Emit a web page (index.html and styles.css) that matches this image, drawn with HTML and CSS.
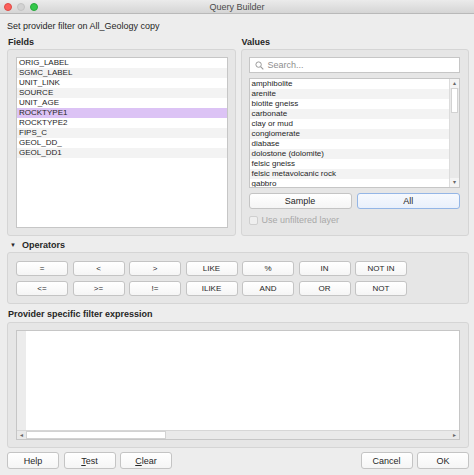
FILE: index.html
```html
<!DOCTYPE html>
<html lang="en">
<head>
  <meta charset="UTF-8" />
  <title>Query Builder</title>
  <link rel="stylesheet" href="styles.css">
</head>
<body>
  <div class="window">
    <div class="titlebar">
      <div class="lights">
        <span class="light red"></span>
        <span class="light off"></span>
        <span class="light green"></span>
      </div>
      <div class="title">Query Builder</div>
    </div>

    <div class="content">
      <div class="intro">Set provider filter on All_Geology copy</div>

      <div class="columns">
        <!-- FIELDS -->
        <div class="column">
          <div class="heading">Fields</div>
          <div class="group fields-group">
            <ul class="list">
              <li>ORIG_LABEL</li>
              <li>SGMC_LABEL</li>
              <li>UNIT_LINK</li>
              <li>SOURCE</li>
              <li>UNIT_AGE</li>
              <li class="selected">ROCKTYPE1</li>
              <li>ROCKTYPE2</li>
              <li>FIPS_C</li>
              <li>GEOL_DD_</li>
              <li>GEOL_DD1</li>
            </ul>
          </div>
        </div>

        <!-- VALUES -->
        <div class="column">
          <div class="heading">Values</div>
          <div class="group values-group">
            <div class="search">
              <svg width="9" height="9" viewBox="0 0 9 9"><circle cx="3.6" cy="3.6" r="2.7" fill="none" stroke="#9a9a9a" stroke-width="1"/><line x1="5.6" y1="5.6" x2="8.3" y2="8.3" stroke="#9a9a9a" stroke-width="1.1"/></svg>
              <span>Search...</span>
            </div>
            <div class="values-list">
              <ul class="list">
                <li>amphibolite</li>
                <li>arenite</li>
                <li>biotite gneiss</li>
                <li>carbonate</li>
                <li>clay or mud</li>
                <li>conglomerate</li>
                <li>diabase</li>
                <li>dolostone (dolomite)</li>
                <li>felsic gneiss</li>
                <li>felsic metavolcanic rock</li>
                <li>gabbro</li>
                <li>granite</li>
              </ul>
              <div class="vscroll">
                <span class="arrow">&#9652;</span>
                <span class="thumb"></span>
                <span class="track"></span>
                <span class="arrow">&#9662;</span>
              </div>
            </div>
            <div class="pair">
              <button class="btn">Sample</button>
              <button class="btn default">All</button>
            </div>
            <label class="check"><span class="box"></span>Use unfiltered layer</label>
          </div>
        </div>
      </div>

      <!-- OPERATORS -->
      <div class="heading op-heading"><span class="caret">&#9660;</span>Operators</div>
      <div class="group ops-group">
        <div class="ops">
          <button class="btn op">=</button>
          <button class="btn op">&lt;</button>
          <button class="btn op">&gt;</button>
          <button class="btn op">LIKE</button>
          <button class="btn op">%</button>
          <button class="btn op">IN</button>
          <button class="btn op">NOT IN</button>
          <button class="btn op">&lt;=</button>
          <button class="btn op">&gt;=</button>
          <button class="btn op">!=</button>
          <button class="btn op">ILIKE</button>
          <button class="btn op">AND</button>
          <button class="btn op">OR</button>
          <button class="btn op">NOT</button>
        </div>
      </div>

      <!-- EXPRESSION -->
      <div class="heading expr-heading">Provider specific filter expression</div>
      <div class="group expr-group">
        <div class="editor">
          <div class="editor-body">
            <div class="gutter"></div>
            <div class="text"></div>
          </div>
          <div class="hscroll">
            <span class="arrow">&#9666;</span>
            <span class="thumb"></span>
            <span class="track"></span>
            <span class="arrow">&#9656;</span>
          </div>
        </div>
      </div>

      <div class="footer">
        <div class="footer-left">
          <button class="btn foot">Help</button>
          <button class="btn foot"><u>T</u>est</button>
          <button class="btn foot"><u>C</u>lear</button>
        </div>
        <div class="footer-right">
          <button class="btn foot">Cancel</button>
          <button class="btn foot">OK</button>
        </div>
      </div>
    </div>
  </div>
</body>
</html>
```

FILE: styles.css
```css
:root {
  --window-bg: #ededed;
  --group-bg: #e6e6e6;
  --group-border: #d5d5d5;
  --field-border: #c6c6c6;
  --alt-row: #f3f3f3;
  --selected: #dcc3f5;
  --text: #262626;
  --muted: #a8a8a8;
}

* {
  box-sizing: border-box;
}

body {
  margin: 0;
  background: var(--window-bg);
  font-family: 'Liberation Sans', Arial, sans-serif;
  color: var(--text);
}

.window {
  width: 474px;
  height: 475px;
  display: flex;
  flex-direction: column;
}

.titlebar {
  height: 14px;
  position: relative;
  background: linear-gradient(#ebebeb, #d5d5d5);
  border-bottom: 1px solid #b9b9b9;
  display: flex;
  align-items: center;
  justify-content: center;
}

.lights {
  position: absolute;
  left: 4px;
  top: 3px;
  display: flex;
  gap: 5px;
}

.light {
  width: 8px;
  height: 8px;
  border-radius: 50%;
}

.light.red { background: #fc605c; border: 0.5px solid #de4a45; }
.light.off { background: #d2d2d2; border: 0.5px solid #c3c3c3; }
.light.green { background: #34c84a; border: 0.5px solid #27a93a; }

.title {
  font-size: 9px;
  color: #4a4a4a;
}

.content {
  flex: 1;
  display: flex;
  flex-direction: column;
  padding: 0 5px 0 7px;
}

.intro {
  font-size: 9px;
  line-height: 12px;
  margin-top: 6px;
}

.columns {
  display: grid;
  grid-template-columns: 1fr 1fr;
  column-gap: 5px;
}

.heading {
  font-size: 9px;
  font-weight: bold;
  line-height: 12px;
  margin-top: 4px;
  margin-bottom: 1px;
  padding-left: 1px;
}

.group {
  background: var(--group-bg);
  border: 1px solid var(--group-border);
  border-radius: 3px;
}

.fields-group {
  height: 187px;
  padding: 7px 7px 7px 8px;
  display: flex;
}

.list {
  list-style: none;
  margin: 0;
  padding: 0;
  font-size: 8px;
}

.list li {
  height: 10px;
  line-height: 10px;
  padding-left: 2px;
  white-space: nowrap;
}

.list li:nth-child(even) {
  background: var(--alt-row);
}

.list li.selected {
  background: var(--selected);
}

.fields-group .list {
  flex: 1;
  background: #fff;
  border: 1px solid var(--field-border);
}

.values-group {
  height: 187px;
  padding: 7px 8px 0 7px;
  display: flex;
  flex-direction: column;
}

.search {
  height: 16px;
  background: #fff;
  border: 1px solid var(--field-border);
  display: flex;
  align-items: center;
  gap: 4px;
  padding-left: 5px;
  font-size: 9px;
  color: #8e8e8e;
}

.values-list {
  margin-top: 5px;
  height: 110px;
  background: #fff;
  border: 1px solid var(--field-border);
  display: flex;
  overflow: hidden;
}

.values-list .list {
  flex: 1;
}

.vscroll {
  width: 10px;
  display: flex;
  flex-direction: column;
  background: #e9e9e9;
  border-left: 1px solid #dcdcdc;
}

.vscroll .arrow {
  height: 9px;
  font-size: 6px;
  line-height: 9px;
  text-align: center;
  color: #666;
  background: #f4f4f4;
}

.vscroll .thumb {
  height: 25px;
  background: #fff;
  border: 1px solid #d2d2d2;
  margin: 0 1px;
}

.vscroll .track {
  flex: 1;
}

.btn {
  font-family: inherit;
  font-size: 9px;
  color: var(--text);
  background: linear-gradient(#ffffff, #f5f5f5);
  border: 1px solid #c4c4c4;
  border-radius: 3px;
  padding: 0;
  height: 16px;
}

.btn.default {
  background: linear-gradient(#f6f9fe, #e9f0fb);
  border-color: #94b6e6;
}

.pair {
  margin-top: 5px;
  display: grid;
  grid-template-columns: 1fr 1fr;
  column-gap: 5px;
}

.check {
  margin-top: 6px;
  display: flex;
  align-items: center;
  gap: 4px;
  font-size: 9px;
  color: var(--muted);
}

.check .box {
  width: 9px;
  height: 9px;
  border: 1px solid #cfcfcf;
  border-radius: 2px;
  background: #efefef;
}

.op-heading {
  margin-top: 3px;
  padding-left: 3px;
  display: flex;
  align-items: center;
}

.caret {
  font-size: 6px;
  margin-right: 6px;
}

.ops-group {
  height: 52px;
  padding: 8px 0 0 8px;
}

.ops {
  display: grid;
  grid-template-columns: repeat(7, 52px);
  column-gap: 4.5px;
  row-gap: 5px;
}

.btn.op {
  height: 15px;
  font-size: 8px;
}

.expr-heading {
  margin-top: 4px;
  margin-bottom: 2px;
}

.expr-group {
  height: 126px;
  padding: 7px 8px 7px 8px;
  display: flex;
}

.editor {
  flex: 1;
  display: flex;
  flex-direction: column;
  background: #fff;
  border: 1px solid var(--field-border);
}

.editor-body {
  flex: 1;
  display: flex;
}

.gutter {
  width: 9px;
  background: #ececec;
}

.text {
  flex: 1;
}

.hscroll {
  height: 9px;
  display: flex;
  background: #e9e9e9;
  border-top: 1px solid #d6d6d6;
}

.hscroll .arrow {
  width: 9px;
  font-size: 6px;
  line-height: 8px;
  text-align: center;
  color: #666;
}

.hscroll .thumb {
  width: 140px;
  background: #fff;
  border: 1px solid #d2d2d2;
}

.hscroll .track {
  flex: 1;
}

.footer {
  margin-top: 4px;
  display: flex;
  justify-content: space-between;
}

.footer-left,
.footer-right {
  display: flex;
  gap: 4.5px;
}

.btn.foot {
  width: 52px;
  height: 17px;
}
```
